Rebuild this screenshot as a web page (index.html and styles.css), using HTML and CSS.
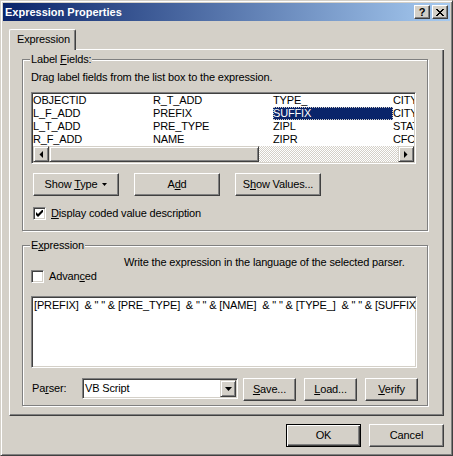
FILE: index.html
```html
<!DOCTYPE html>
<html lang="en">
<head>
    <meta charset="UTF-8">
    <title>Expression Properties</title>
    <link rel="stylesheet" href="styles.css">
</head>
<body>
<div class="window">
    <div class="titlebar">
        <span class="title">Expression Properties</span>
        <div class="caption-buttons">
            <span class="caption-btn">?</span>
            <span class="caption-btn">
                <svg width="8" height="7" viewBox="0 0 8 7" shape-rendering="crispEdges"><path d="M0 0h2v1H0zM6 0h2v1H6zM1 1h2v1H1zM5 1h2v1H5zM2 2h4v1H2zM3 3h2v1H3zM2 4h4v1H2zM1 5h2v1H1zM5 5h2v1H5zM0 6h2v1H0zM6 6h2v1H6z" fill="#000"/></svg>
            </span>
        </div>
    </div>

    <div class="tabstrip">
        <div class="tab">Expression</div>
        <div class="tab-fill"></div>
    </div>

    <div class="panel">
        <!-- Label fields -->
        <fieldset class="group group-fields">
            <legend>Label <u>F</u>ields:</legend>
            <p class="hint">Drag label fields from the list box to the expression.</p>
            <div class="listbox">
                <div class="list-items">
                    <span>OBJECTID</span>
                    <span>L_F_ADD</span>
                    <span>L_T_ADD</span>
                    <span>R_F_ADD</span>
                    <span>R_T_ADD</span>
                    <span>PREFIX</span>
                    <span>PRE_TYPE</span>
                    <span>NAME</span>
                    <span>TYPE_</span>
                    <span class="selected">SUFFIX</span>
                    <span>ZIPL</span>
                    <span>ZIPR</span>
                    <span>CITYL</span>
                    <span>CITYR</span>
                    <span>STATE</span>
                    <span>CFCC</span>
                </div>
                <div class="hscroll">
                    <span class="raised scroll-btn"><svg width="4" height="7" viewBox="0 0 4 7"><polygon points="4,0 4,7 0.5,3.5" fill="#000"/></svg></span>
                    <span class="raised scroll-thumb"></span>
                    <span class="scroll-track"></span>
                    <span class="raised scroll-btn"><svg width="4" height="7" viewBox="0 0 4 7"><polygon points="0,0 0,7 3.5,3.5" fill="#000"/></svg></span>
                </div>
            </div>
            <div class="btn-row">
                <button class="btn btn-wide"><span>Show <u>T</u>ype</span><svg class="drop" width="5" height="3" viewBox="0 0 5 3"><polygon points="0,0 5,0 2.5,3" fill="#000"/></svg></button>
                <button class="btn btn-wide"><span>A<u>d</u>d</span></button>
                <button class="btn btn-wide"><span>S<u>h</u>ow Values...</span></button>
            </div>
            <label class="check">
                <span class="checkbox"><svg width="7" height="7" viewBox="0 0 7 7"><polygon points="0,2 2,4 7,-1 7,2 2,7 0,5" fill="#000"/></svg></span>
                <span><u>D</u>isplay coded value description</span>
            </label>
        </fieldset>

        <!-- Expression -->
        <fieldset class="group group-expr">
            <legend>E<u>x</u>pression</legend>
            <div class="expr-top">
                <label class="check check-adv">
                    <span class="checkbox"></span>
                    <span>Advan<u>c</u>ed</span>
                </label>
                <span class="expr-hint">Write the expression in the language of the selected parser.</span>
            </div>
            <div class="expr-box">[PREFIX]  &amp; " " &amp; [PRE_TYPE]  &amp; " " &amp; [NAME]  &amp; " " &amp; [TYPE_]  &amp; " " &amp; [SUFFIX]</div>
            <div class="parser-row">
                <span class="parser-label">Pa<u>r</u>ser:</span>
                <div class="combo">
                    <span class="combo-text">VB Script</span>
                    <span class="raised combo-btn"><svg width="7" height="4" viewBox="0 0 7 4"><polygon points="0,0 7,0 3.5,4" fill="#000"/></svg></span>
                </div>
                <button class="btn btn-small"><span><u>S</u>ave...</span></button>
                <button class="btn btn-small"><span><u>L</u>oad...</span></button>
                <button class="btn btn-small"><span><u>V</u>erify</span></button>
            </div>
        </fieldset>
    </div>

    <div class="dialog-btns">
        <button class="btn btn-dialog btn-default">OK</button>
        <button class="btn btn-dialog">Cancel</button>
    </div>
</div>
</body>
</html>
```

FILE: styles.css
```css
* {
    box-sizing: border-box;
}
body {
    margin: 0;
    background-color: #d4d0c8;
    font-family: "Liberation Sans", Arial, sans-serif;
    font-size: 11px;
    line-height: 13px;
    letter-spacing: -0.15px;
    color: #000;
}
u {
    text-decoration-thickness: 1px;
    text-underline-offset: 1px;
}
.window {
    width: 453px;
    height: 456px;
    padding: 2px;
    border: 1px solid;
    border-color: #d4d0c8 #404040 #404040 #d4d0c8;
    box-shadow: inset 1px 1px #fff, inset -1px -1px #808080;
    background-color: #d4d0c8;
}
.titlebar {
    height: 18px;
    display: flex;
    align-items: center;
    justify-content: space-between;
    padding: 0 2px;
    background: linear-gradient(to right, #0a246a, #a6caf0);
}
.title {
    color: #fff;
    font-weight: bold;
    letter-spacing: 0;
}
.caption-buttons {
    display: flex;
    gap: 2px;
}
.caption-btn {
    width: 16px;
    height: 14px;
    display: flex;
    align-items: center;
    justify-content: center;
    font-weight: bold;
    background-color: #d4d0c8;
    border: 1px solid;
    border-color: #fff #404040 #404040 #fff;
    box-shadow: inset -1px -1px #808080;
}

/* tabs */
.tabstrip {
    display: flex;
    height: 21px;
    margin: 8px 6px 0 6px;
}
.tab {
    width: 67px;
    padding: 3px 0 0 7px;
    border-top: 1px solid #fff;
    border-left: 1px solid #fff;
    border-right: 1px solid #404040;
    border-radius: 2px 2px 0 0;
    box-shadow: inset -1px 0 #808080;
}
.tab-fill {
    flex: 1;
    border-bottom: 1px solid #fff;
}
.panel {
    margin: 0 6px;
    padding: 3px 15px 9px 12px;
    border-left: 1px solid #fff;
    border-right: 1px solid #404040;
    border-bottom: 1px solid #404040;
    box-shadow: inset -1px -1px #808080;
}

/* group boxes */
.group {
    margin: 0;
    min-width: 0;
    padding: 5px 8px 10px 8px;
    border: 1px solid #808080;
    box-shadow: 1px 1px #fff, inset 1px 1px #fff;
}
.group legend {
    margin-left: -1px;
    padding: 0 1px;
    line-height: 13px;
    background-color: #d4d0c8;
}
.group-expr {
    margin-top: 8px;
    padding: 4px 8px 4px 8px;
}
.hint {
    margin: 0;
}

/* list box */
.listbox {
    width: 385px;
    margin-top: 8px;
    padding: 1px;
    background-color: #fff;
    border: 1px solid;
    border-color: #808080 #fff #fff #808080;
    box-shadow: inset 1px 1px #404040, inset -1px -1px #d4d0c8;
}
.list-items {
    display: grid;
    grid-auto-flow: column;
    grid-template-rows: repeat(4, 13px);
    grid-auto-columns: 120px;
    overflow: hidden;
    white-space: nowrap;
}
.list-items .selected {
    background-color: #0a246a;
    color: #fff;
    outline: 1px dotted #d4d0c8;
    outline-offset: -1px;
}
.hscroll {
    display: flex;
    height: 16px;
    background: repeating-conic-gradient(#fff 0 25%, #d4d0c8 0 50%) 0 0 / 2px 2px;
}
.raised {
    background-color: #d4d0c8;
    border: 1px solid;
    border-color: #d4d0c8 #404040 #404040 #d4d0c8;
    box-shadow: inset 1px 1px #fff, inset -1px -1px #808080;
}
.scroll-btn {
    width: 16px;
    display: flex;
    align-items: center;
    justify-content: center;
}
.scroll-thumb {
    width: 210px;
}
.scroll-track {
    flex: 1;
}

/* buttons */
.btn {
    display: flex;
    align-items: center;
    justify-content: center;
    height: 23px;
    padding: 0;
    font: inherit;
    letter-spacing: inherit;
    color: #000;
    background-color: #d4d0c8;
    border: 1px solid;
    border-color: #fff #404040 #404040 #fff;
    box-shadow: inset -1px -1px #808080;
}
.btn-row {
    display: flex;
    gap: 15px;
    margin: 9px 0 0 2px;
}
.btn-wide {
    width: 86px;
}
.btn .drop {
    margin-left: 5px;
}
.btn-small {
    width: 53px;
}
.btn-dialog {
    width: 75px;
}
.btn-default {
    border-color: #000;
    box-shadow: inset 1px 1px #fff, inset -1px -1px #404040, inset -2px -2px #808080;
}

/* check boxes */
.check {
    display: flex;
    align-items: center;
    gap: 5px;
    margin: 11px 0 0 2px;
}
.checkbox {
    width: 13px;
    height: 13px;
    display: flex;
    align-items: center;
    justify-content: center;
    background-color: #fff;
    border: 1px solid;
    border-color: #808080 #fff #fff #808080;
    box-shadow: inset 1px 1px #404040, inset -1px -1px #d4d0c8;
}

/* expression group */
.expr-top {
    display: flex;
    align-items: flex-start;
}
.check-adv {
    width: 93px;
    margin: 14px 0 0 0;
}
.expr-box {
    width: 386px;
    height: 72px;
    margin-top: 13px;
    padding: 2px 2px;
    overflow: hidden;
    white-space: pre;
    background-color: #fff;
    border: 1px solid;
    border-color: #808080 #fff #fff #808080;
    box-shadow: inset 1px 1px #404040, inset -1px -1px #d4d0c8;
}
.parser-row {
    display: flex;
    align-items: flex-start;
    gap: 8px;
    margin-top: 10px;
}
.parser-label {
    width: 51px;
    margin-right: -8px;
    padding-left: 1px;
    line-height: 21px;
}
.combo {
    width: 156px;
    height: 21px;
    display: flex;
    margin-right: -3px;
    background-color: #fff;
    border: 1px solid;
    border-color: #808080 #fff #fff #808080;
    box-shadow: inset 1px 1px #404040, inset -1px -1px #d4d0c8;
    padding: 1px;
}
.combo-text {
    flex: 1;
    padding-left: 1px;
    line-height: 17px;
}
.combo-btn {
    width: 16px;
    display: flex;
    align-items: center;
    justify-content: center;
}

.dialog-btns {
    display: flex;
    justify-content: flex-end;
    gap: 8px;
    margin: 8px 6px 0 0;
}
```
